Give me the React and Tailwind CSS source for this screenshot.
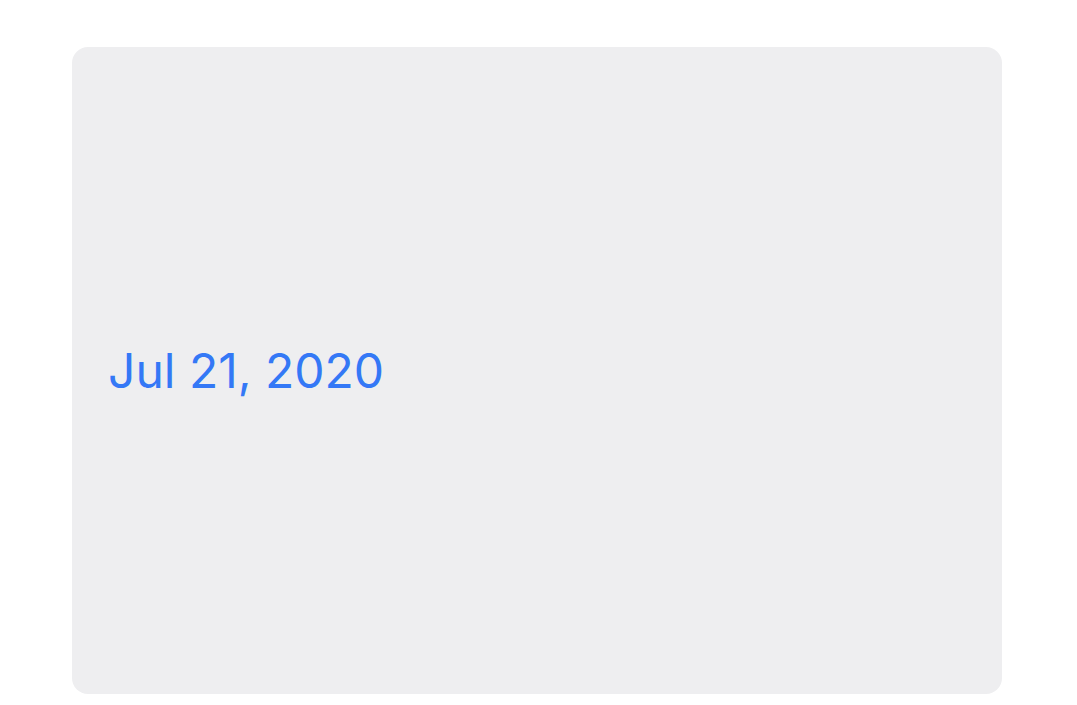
export default function App() {
  return (
    <div className="w-[1077px] h-[705px] bg-white pt-[47px] pl-[72px]">
      <div className="w-[930px] h-[647px] rounded-[16px] bg-[#eeeef0] flex items-center pl-[36px]">
        <span className="text-[#3478f6] text-[48px] leading-none" style={{ fontFamily: 'Inter, sans-serif' }}>
          Jul 21, 2020
        </span>
      </div>
    </div>
  );
}
